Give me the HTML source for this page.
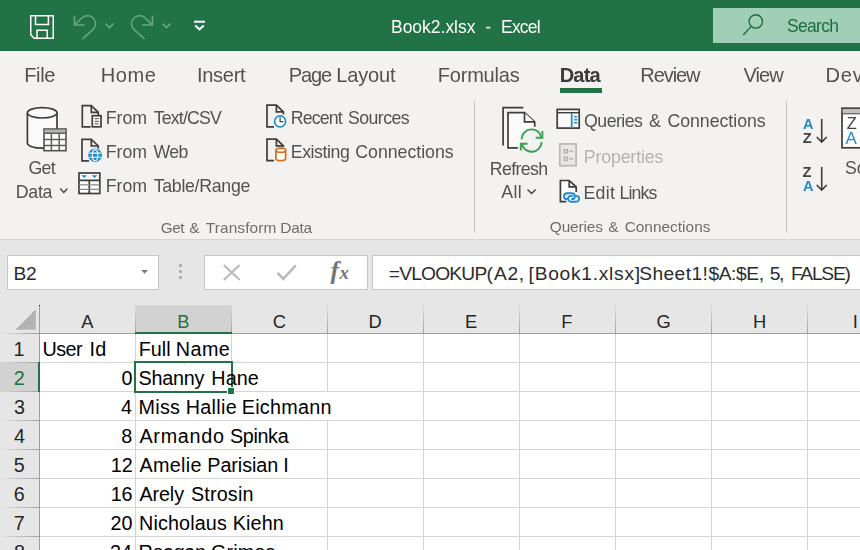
<!DOCTYPE html>
<html lang="en">
<head>
<meta charset="utf-8">
<title>Book2.xlsx - Excel</title>
<style>
*{box-sizing:border-box;margin:0;padding:0}
html,body{width:860px;height:550px;overflow:hidden;background:#fff}
body{position:relative;font-family:"Liberation Sans",Arial,sans-serif;color:#444}
.abs,.t,svg{position:absolute}
.t{white-space:pre;line-height:1;display:block}
#titlebar-text,#ribbon-tabs,#ribbon-commands,#ribbon-group-labels,#sort-icon-letters{will-change:transform}
#titlebar{left:0;top:0;width:860px;height:51px;background:#217346}
#search{left:713px;top:8px;width:147px;height:35px;background:#a0ceb7}
#ribbon{left:0;top:51px;width:860px;height:188px;background:#f3f2f1}
#ribbonline{left:0;top:239px;width:860px;height:1px;background:#d6d5d4}
#fbar{left:0;top:240px;width:860px;height:65px;background:#e6e6e6}
.box{background:#fff;border:1px solid #c6c6c6}
#namebox{left:7px;top:255px;width:152px;height:35px}
#fxbox{left:204px;top:255px;width:164px;height:35px}
#formulabox{left:372px;top:255px;width:500px;height:35px}
#tabline{left:560px;top:88px;width:42px;height:5px;background:#217346}
.vsep{width:1px;background:#c8c6c4;top:101px;height:132px}
#grid{left:0;top:305px;width:860px;height:245px;background:#fff}
#colhead{left:0;top:305px;width:860px;height:28px;background:#e6e6e6}
#rowhead{left:0;top:333px;width:39px;height:217px;background:#e6e6e6}
.hl{height:1px;background:#d4d4d4;left:39px;width:821px}
.rl{height:1px;background:linear-gradient(90deg,#e2e2e2,#a2a2a2);left:0;width:39px}
.vl{width:1px;background:#d4d4d4;top:334px;height:216px}
.cl{width:1px;background:linear-gradient(180deg,#dedede,#a0a0a0);top:305px;height:28px}
</style>
</head>
<body>
<div class="abs" id="titlebar"></div>
<div class="abs" style="left:0;top:50px;width:860px;height:1px;background:#1d6a3f"></div>
<div class="abs" id="search"></div>
<div class="abs" id="ribbon"></div>
<div class="abs" id="ribbonline"></div>
<div class="abs" id="fbar"></div>
<div class="abs box" id="namebox"></div>
<div class="abs box" id="fxbox"></div>
<div class="abs box" id="formulabox"></div>
<div class="abs" id="tabline"></div>
<div class="abs vsep" style="left:474px"></div>
<div class="abs vsep" style="left:786px"></div>
<div class="abs" id="grid"></div>
<div class="abs" id="colhead"></div>
<div class="abs" id="rowhead"></div>
<div class="abs" style="left:136px;top:305px;width:95px;height:28px;background:#d2d2d2"></div>
<div class="abs" style="left:0;top:363px;width:39px;height:28px;background:#d2d2d2"></div>
<div class="abs cl" style="left:135px"></div>
<div class="abs cl" style="left:231px"></div>
<div class="abs cl" style="left:327px"></div>
<div class="abs cl" style="left:423px"></div>
<div class="abs cl" style="left:519px"></div>
<div class="abs cl" style="left:615px"></div>
<div class="abs cl" style="left:711px"></div>
<div class="abs cl" style="left:807px"></div>
<div class="abs hl" style="top:362px"></div>
<div class="abs rl" style="top:362px;background:linear-gradient(90deg,#d6d6d6,#a2a2a2)"></div>
<div class="abs hl" style="top:391px"></div>
<div class="abs rl" style="top:391px;background:linear-gradient(90deg,#d6d6d6,#a2a2a2)"></div>
<div class="abs hl" style="top:420px"></div>
<div class="abs rl" style="top:420px"></div>
<div class="abs hl" style="top:449px"></div>
<div class="abs rl" style="top:449px"></div>
<div class="abs hl" style="top:478px"></div>
<div class="abs rl" style="top:478px"></div>
<div class="abs hl" style="top:507px"></div>
<div class="abs rl" style="top:507px"></div>
<div class="abs hl" style="top:536px"></div>
<div class="abs rl" style="top:536px"></div>
<div class="abs vl" style="left:135px"></div>
<div class="abs vl" style="left:231px;height:28px"></div>
<div class="abs vl" style="left:327px;height:57px"></div>
<div class="abs vl" style="left:327px;top:421px;height:129px"></div>
<div class="abs vl" style="left:423px"></div>
<div class="abs vl" style="left:519px"></div>
<div class="abs vl" style="left:615px"></div>
<div class="abs vl" style="left:711px"></div>
<div class="abs vl" style="left:807px"></div>
<div class="abs" style="left:0;top:333px;width:39px;height:1px;background:linear-gradient(90deg,#e2e2e2,#9e9e9e)"></div>
<div class="abs" style="left:39px;top:333px;width:821px;height:1px;background:#9e9e9e"></div>
<div class="abs" style="left:39px;top:306px;width:1px;height:244px;background:#9e9e9e"></div>
<div class="abs" style="left:39px;top:305px;width:1px;height:1px;background:#111"></div>
<div class="abs" style="left:135px;top:332px;width:97px;height:2px;background:#217346"></div>
<div class="abs" style="left:38px;top:362px;width:2px;height:30px;background:#217346"></div>
<div class="abs" id="sel" style="left:134px;top:361px;width:99px;height:32px;border:2px solid #217346"></div>
<div class="abs" style="left:227px;top:387px;width:8px;height:8px;background:#fff"></div>
<div class="abs" style="left:228px;top:388px;width:6px;height:6px;background:#217346"></div>
<svg id="icons" width="860" height="550" viewBox="0 0 860 550" style="left:0;top:0" fill="none" stroke-linecap="butt" stroke-linejoin="miter">
<!-- quick access toolbar -->
<g id="qat" stroke="#fff" stroke-width="1.5">
<path d="M30.75 15.75H53.25V38.25H34.2L30.75 34.8Z"/>
<path d="M35.5 15.75V24.5H48.4V15.75"/>
<path d="M37 38.25V30.2H47.2V38.25"/>
</g>
<g id="undo-redo" stroke="#65a582" stroke-width="1.6">
<path d="M74.5 15.7V25H84.7"/>
<path d="M74.9 24.6L81.8 18A8 8 0 0 1 93.2 29.4L82.6 38.9"/>
<path d="M105.4 23.6L109.5 27.6L113.6 23.6"/>
<path d="M152.5 15.7V25H142"/>
<path d="M152.1 24.6L145.3 18A8 8 0 0 0 133.9 29.4L144.5 38.9"/>
<path d="M162.5 23.6L166.4 27.6L170.3 23.6"/>
</g>
<g id="qat-more" stroke="#fff" stroke-width="2">
<path d="M194 21.7H205"/>
<path d="M195.2 25.5L199.5 29.3L203.8 25.5"/>
</g>
<!-- search magnifier -->
<g id="magnifier" stroke="#1e6b41" stroke-width="1.4">
<circle cx="755.8" cy="21.4" r="6.7"/>
<path d="M751.2 26.4L743.3 35"/>
</g>
<!-- Get Data -->
<g id="getdata" stroke="#3e3d3c" stroke-width="1.7">
<path d="M27.4 112.8V143A14.8 5.2 0 0 0 57 143V112.8" fill="#fafafa"/>
<ellipse cx="42.2" cy="112.8" rx="14.8" ry="5.2" fill="#fafafa"/>
<rect x="44" y="129" width="22" height="21.7" fill="#fff" stroke="#555351" stroke-width="1.6"/>
<rect x="44.75" y="129.75" width="20.5" height="3.3" fill="#b3b0ad" stroke="none"/>
<path d="M44 133.3H66M44 139.5H66M44 145.5H66M51.4 133.3V150.7M59.2 133.3V150.7" stroke="#5f5d5b" stroke-width="1.5"/>
</g>
<!-- From Text/CSV -->
<g id="fromtext" stroke="#3e3d3c" stroke-width="1.7">
<path d="M90.6 126.8H82.3V105.6H91.3L98.3 112.3V115.5"/>
<path d="M91.3 105.6V112.3H98.3"/>
<rect x="92.3" y="115.7" width="8.7" height="11.1" fill="#fff"/>
<path d="M94.6 118.7H98.8M94.6 121.3H98.8M94.6 123.9H98.8" stroke="#6a6866" stroke-width="1.2"/>
</g>
<!-- From Web -->
<g id="fromweb" stroke="#3e3d3c" stroke-width="1.7">
<path d="M89 160.8H82V139.3H91.3L98.3 146V148.5"/>
<path d="M91.3 139.3V146H98.3"/>
<circle cx="95.1" cy="155.2" r="6.8" fill="#1e8bcd" stroke="none"/>
<ellipse cx="95.1" cy="155.2" rx="2.7" ry="5.6" stroke="#fff" stroke-width="1.1"/>
<path d="M89.3 153.1H100.9M89.3 157.3H100.9" stroke="#fff" stroke-width="1.1"/>
</g>
<!-- From Table/Range -->
<g id="fromtable" stroke="#3e3d3c" stroke-width="1.7">
<rect x="79" y="173" width="20.8" height="20.5" fill="#fff"/>
<path d="M79 180.4H99.8M89.3 180.4V193.5"/>
<path d="M79 184.9H99.8M79 189.4H99.8" stroke="#8a8886" stroke-width="1.2"/>
<path d="M81.3 175.3H87.1L84.2 178.1ZM91.6 175.3H97.6L94.6 178.1Z" fill="#1e8bcd" stroke="none"/>
</g>
<!-- Recent Sources -->
<g id="recent" stroke="#3e3d3c" stroke-width="1.7">
<path d="M274 126.8H267V105.2H276.4L283.4 111.9V114.5"/>
<path d="M276.4 105.2V111.9H283.4"/>
<circle cx="280.1" cy="121.4" r="5.5" fill="#fff" stroke="#1e8bcd" stroke-width="1.6"/>
<path d="M280.1 117.2V121.7H283.4" stroke-width="1.2"/>
</g>
<!-- Existing Connections -->
<g id="existing" stroke="#3e3d3c" stroke-width="1.7">
<path d="M274 160.7H267V139.2H276.4L283.4 145.9V147"/>
<path d="M276.4 139.2V145.9H283.4"/>
<path d="M275.9 150.2V158.6A4.85 2.1 0 0 0 285.6 158.6V150.2" fill="#fff" stroke="#dc6c14"/>
<ellipse cx="280.75" cy="150.2" rx="4.85" ry="2.1" fill="#fff" stroke="#dc6c14"/>
</g>
<!-- Refresh All -->
<g id="refresh" stroke="#3e3d3c" stroke-width="1.7">
<path d="M503.1 145.6V107.6H523.3"/>
<path d="M517.9 147.9H508V112.7H524.5L534.7 121.9V126.7" fill="#fafafa"/>
<path d="M524.5 112.7V121.9H534.7" fill="#fafafa"/>
<circle cx="531.6" cy="140.6" r="12" fill="#f3f2f1" stroke="none"/>
<g stroke="#35a24d" stroke-width="1.9">
<path d="M521.6 139.2A10 10 0 0 1 541.4 137.4"/>
<path d="M542.4 131.1V137.8H535.7"/>
<path d="M541.6 142A10 10 0 0 1 521.8 143.8"/>
<path d="M520.8 150.4V143.7H527.6"/>
</g>
</g>
<!-- Queries & Connections -->
<g id="queries" stroke="#3e3d3c" stroke-width="1.7">
<rect x="557.2" y="109.4" width="22" height="18.7" fill="#fafafa"/>
<path d="M557.2 112.7H579.2" stroke-width="1.4"/>
<path d="M571.7 113V128" stroke="#1e8bcd"/>
<path d="M574.2 116.8H577.2M574.2 119.8H577.2M574.2 122.8H577.2" stroke="#1e8bcd" stroke-width="1.4"/>
</g>
<!-- Properties (disabled) -->
<g id="props" stroke="#bcbab8" stroke-width="1.8">
<rect x="559.8" y="143.9" width="16.3" height="21.8" fill="#e9e8e7"/>
<rect x="564.2" y="149.7" width="3.2" height="3.2" stroke-width="1.5" stroke="#b4b2b0"/>
<rect x="564.2" y="157.2" width="3.2" height="3.2" stroke-width="1.5" stroke="#b4b2b0"/>
<path d="M569.5 151.3H573M569.5 158.8H573" stroke-width="1.5" stroke="#b4b2b0"/>
</g>
<!-- Edit Links -->
<g id="editlinks" stroke="#3e3d3c" stroke-width="1.7">
<path d="M566.3 201.6H560.4V180.5H569.2L576.2 186.9V192" fill="#fafafa"/>
<path d="M569.2 180.5V186.9H576.2"/>
<g stroke="#1e8bcd" stroke-width="1.9" stroke-linecap="round">
<path d="M567 199.1A2.95 2.95 0 0 1 567 193.2H571.9A2.95 2.95 0 0 1 571.9 199.1"/>
<path d="M572.3 195.9H571A2.95 2.95 0 0 0 571 201.8H576.2A2.95 2.95 0 0 0 576.2 195.9"/>
</g>
</g>
<!-- dropdown chevrons -->
<g id="chevrons" stroke="#444" stroke-width="1.4">
<path d="M60.2 188.6L63.8 192.4L67.4 188.6"/>
<path d="M527.5 189.4L531.6 193.5L535.7 189.4"/>
</g>
<!-- Sort A-Z / Z-A arrows -->
<g id="sortarrows" stroke="#3e3d3c" stroke-width="1.6">
<path d="M821.7 119.1V141.8M816.7 137L821.7 142L826.7 137"/>
<path d="M821.7 167V189.8M816.7 185L821.7 190L826.7 185"/>
</g>
<!-- Sort big icon -->
<g id="sortbig" stroke="#3e3d3c" stroke-width="1.7">
<rect x="842" y="108.2" width="30" height="39.6" fill="#fff"/>
<rect x="842.75" y="108.95" width="20" height="4.4" fill="#c2c0be" stroke="none"/>
<path d="M842 113.8H862" stroke-width="1"/>
</g>
<!-- formula bar glyphs -->
<g id="fbaricons">
<path d="M141.2 270H148L144.6 273.8Z" fill="#777"/>
<path d="M179 264h3v3h-3zM179 270h3v3h-3zM179 276h3v3h-3z" fill="#b0b0b0"/>
<path d="M223.8 265L239.6 280M239.6 265L223.8 280" stroke="#b9b9b9" stroke-width="2"/>
<path d="M277.6 273L283.3 278.8L295.8 265.3" stroke="#b9b9b9" stroke-width="2.6"/>
</g>
<!-- select all corner -->
<path d="M35.8 309.3V329.8H15.4Z" fill="#b3b3b3"/>
</svg>

<div class="grp" id="titlebar-text">
<span class="t" style="left:391.02px;top:19px;font-size:17.44px;letter-spacing:0.013px;color:#fff">Book2.xlsx</span>
<span class="t" style="left:485.24px;top:19px;font-size:17.44px;color:#fff">-</span>
<span class="t" style="left:501.02px;top:19px;font-size:17.44px;letter-spacing:-0.757px;color:#fff">Excel</span>
<span class="t" style="left:786.92px;top:18px;font-size:17.44px;letter-spacing:-0.629px;color:#1e6b41">Search</span>
</div>
<div class="grp" id="ribbon-tabs">
<span class="t" style="left:24.29px;top:65px;font-size:20.06px;letter-spacing:-0.408px;color:#525252">File</span>
<span class="t" style="left:100.79px;top:65px;font-size:20.06px;letter-spacing:0.535px;color:#525252">Home</span>
<span class="t" style="left:196.91px;top:65px;font-size:20.06px;letter-spacing:-0.275px;color:#525252">Insert</span>
<span class="t" style="left:288.79px;top:65px;font-size:20.06px;letter-spacing:-1.168px;color:#525252">Page</span>
<span class="t" style="left:336.29px;top:65px;font-size:20.06px;letter-spacing:-0.162px;color:#525252">Layout</span>
<span class="t" style="left:437.79px;top:65px;font-size:20.06px;letter-spacing:-0.233px;color:#525252">Formulas</span>
<span class="t" style="left:559.63px;top:65px;font-size:20.06px;letter-spacing:-0.799px;color:#3b3a39;font-weight:700">Data</span>
<span class="t" style="left:640.29px;top:65px;font-size:20.06px;letter-spacing:-1.082px;color:#525252">Review</span>
<span class="t" style="left:743.47px;top:65px;font-size:20.06px;letter-spacing:-0.983px;color:#525252">View</span>
<span class="t" style="left:825.59px;top:65px;font-size:20.06px;letter-spacing:0.739px;color:#525252">Developer</span>
</div>
<div class="grp" id="ribbon-commands">
<span class="t" style="left:105.70px;top:110px;font-size:17.73px;letter-spacing:-0.007px;color:#525252">From</span>
<span class="t" style="left:153.69px;top:110px;font-size:17.73px;letter-spacing:-0.825px;color:#525252">Text/CSV</span>
<span class="t" style="left:105.70px;top:144px;font-size:17.73px;letter-spacing:-0.007px;color:#525252">From</span>
<span class="t" style="left:153.45px;top:144px;font-size:17.73px;letter-spacing:-0.593px;color:#525252">Web</span>
<span class="t" style="left:105.70px;top:178px;font-size:17.73px;letter-spacing:-0.007px;color:#525252">From</span>
<span class="t" style="left:153.69px;top:178px;font-size:17.73px;letter-spacing:-0.287px;color:#525252">Table/Range</span>
<span class="t" style="left:290.81px;top:110px;font-size:17.73px;letter-spacing:-0.842px;color:#525252">Recent</span>
<span class="t" style="left:347.93px;top:110px;font-size:17.73px;letter-spacing:-0.551px;color:#525252">Sources</span>
<span class="t" style="left:290.81px;top:144px;font-size:17.73px;letter-spacing:-0.435px;color:#525252">Existing</span>
<span class="t" style="left:355.33px;top:144px;font-size:17.73px;letter-spacing:-0.020px;color:#525252">Connections</span>
<span class="t" style="left:28.50px;top:160px;font-size:17.73px;letter-spacing:-0.689px;color:#525252">Get</span>
<span class="t" style="left:15.72px;top:184px;font-size:17.73px;letter-spacing:-0.232px;color:#525252">Data</span>
<span class="t" style="left:489.70px;top:161px;font-size:17.73px;letter-spacing:-0.588px;color:#525252">Refresh</span>
<span class="t" style="left:501.31px;top:184px;font-size:17.73px;letter-spacing:0.327px;color:#525252">All</span>
<span class="t" style="left:584.10px;top:113px;font-size:17.73px;letter-spacing:-0.539px;color:#525252">Queries</span>
<span class="t" style="left:649.06px;top:113px;font-size:17.73px;color:#525252">&amp;</span>
<span class="t" style="left:667.43px;top:113px;font-size:17.73px;letter-spacing:-0.022px;color:#525252">Connections</span>
<span class="t" style="left:583.72px;top:149px;font-size:17.73px;letter-spacing:-0.128px;color:#b5b3b1">Properties</span>
<span class="t" style="left:583.42px;top:185px;font-size:17.73px;letter-spacing:0.322px;color:#525252">Edit</span>
<span class="t" style="left:619.42px;top:185px;font-size:17.73px;letter-spacing:-0.864px;color:#525252">Links</span>
<span class="t" style="left:844.88px;top:160px;font-size:17.73px;letter-spacing:-0.060px;color:#525252">Sort</span>
</div>
<div class="grp" id="ribbon-group-labels">
<span class="t" style="left:160.68px;top:220px;font-size:15.41px;letter-spacing:-0.498px;color:#706e6c">Get</span>
<span class="t" style="left:189.34px;top:220px;font-size:15.41px;color:#706e6c">&amp;</span>
<span class="t" style="left:205.71px;top:220px;font-size:15.41px;letter-spacing:0.138px;color:#706e6c">Transform</span>
<span class="t" style="left:280.25px;top:220px;font-size:15.41px;letter-spacing:-0.205px;color:#706e6c">Data</span>
<span class="t" style="left:549.84px;top:219px;font-size:15.41px;letter-spacing:-0.156px;color:#706e6c">Queries</span>
<span class="t" style="left:608.15px;top:219px;font-size:15.41px;color:#706e6c">&amp;</span>
<span class="t" style="left:624.63px;top:219px;font-size:15.41px;letter-spacing:0.016px;color:#706e6c">Connections</span>
</div>
<div class="grp" id="sort-icon-letters">
<span class="t" style="left:802.91px;top:117px;font-size:14.53px;color:#1e8bcd;font-weight:700">A</span>
<span class="t" style="left:802.75px;top:131px;font-size:14.68px;color:#444;font-weight:700">Z</span>
<span class="t" style="left:802.41px;top:165px;font-size:14.68px;color:#444;font-weight:700">Z</span>
<span class="t" style="left:802.91px;top:179px;font-size:14.53px;color:#1e8bcd;font-weight:700">A</span>
<span class="t" style="left:846.65px;top:115px;font-size:16.42px;color:#444">Z</span>
<span class="t" style="left:845.45px;top:130px;font-size:17.01px;color:#1e8bcd">A</span>
</div>
<div class="grp" id="formula-bar-text">
<span class="t" style="left:13.39px;top:264px;font-size:19.19px;letter-spacing:-0.220px;color:#2b2b2b">B2</span>
<span class="t" style="left:330.40px;top:258px;font-size:25.34px;color:#747474;font-weight:700;font-family:'Liberation Serif',serif;font-style:italic">f</span>
<span class="t" style="left:339.61px;top:264px;font-size:18.78px;color:#747474;font-weight:700;font-family:'Liberation Serif',serif;font-style:italic">x</span>
<span class="t" style="left:388.71px;top:264px;font-size:19.19px;letter-spacing:-0.781px;color:#2b2b2b">=VLOOKUP(</span>
<span class="t" style="left:494.08px;top:264px;font-size:19.19px;letter-spacing:0.576px;color:#2b2b2b">A2,</span>
<span class="t" style="left:528.57px;top:264px;font-size:19.19px;letter-spacing:0.734px;color:#2b2b2b">[Book1.xlsx]</span>
<span class="t" style="left:639.28px;top:264px;font-size:19.19px;letter-spacing:0.404px;color:#2b2b2b">Sheet1!</span>
<span class="t" style="left:708.40px;top:264px;font-size:19.19px;letter-spacing:-0.393px;color:#2b2b2b">$A:$E,</span>
<span class="t" style="left:769.76px;top:264px;font-size:19.19px;letter-spacing:-1.315px;color:#2b2b2b">5,</span>
<span class="t" style="left:790.89px;top:264px;font-size:19.19px;letter-spacing:-1.223px;color:#2b2b2b">FALSE)</span>
</div>
<div class="grp" id="column-headers">
<span class="t" style="left:81.37px;top:313px;font-size:18.31px;color:#262626">A</span>
<span class="t" style="left:177.17px;top:313px;font-size:18.31px;color:#217346">B</span>
<span class="t" style="left:272.87px;top:313px;font-size:18.31px;color:#262626">C</span>
<span class="t" style="left:368.54px;top:313px;font-size:18.31px;color:#262626">D</span>
<span class="t" style="left:464.96px;top:313px;font-size:18.31px;color:#262626">E</span>
<span class="t" style="left:561.34px;top:313px;font-size:18.31px;color:#262626">F</span>
<span class="t" style="left:656.56px;top:313px;font-size:18.31px;color:#262626">G</span>
<span class="t" style="left:752.91px;top:313px;font-size:18.31px;color:#262626">H</span>
<span class="t" style="left:852.81px;top:313px;font-size:18.31px;color:#262626">I</span>
</div>
<div class="grp" id="row-headers">
<span class="t" style="left:13.57px;top:340px;font-size:19.77px;color:#262626">1</span>
<span class="t" style="left:13.82px;top:369px;font-size:19.77px;color:#217346">2</span>
<span class="t" style="left:13.91px;top:398px;font-size:19.77px;color:#262626">3</span>
<span class="t" style="left:14.02px;top:427px;font-size:19.77px;color:#262626">4</span>
<span class="t" style="left:13.84px;top:456px;font-size:19.77px;color:#262626">5</span>
<span class="t" style="left:13.73px;top:485px;font-size:19.77px;color:#262626">6</span>
<span class="t" style="left:13.80px;top:514px;font-size:19.77px;color:#262626">7</span>
<span class="t" style="left:13.91px;top:543px;font-size:19.77px;color:#262626">8</span>
</div>
<div class="grp" id="cells">
<span class="t" style="left:42.62px;top:340px;font-size:19.77px;letter-spacing:-0.623px;color:#000">User</span>
<span class="t" style="left:89.55px;top:340px;font-size:19.77px;letter-spacing:0.238px;color:#000">Id</span>
<span class="t" style="left:138.79px;top:340px;font-size:19.77px;letter-spacing:-0.010px;color:#000">Full</span>
<span class="t" style="left:175.79px;top:340px;font-size:19.77px;letter-spacing:0.451px;color:#000">Name</span>
<span class="t" style="left:138.41px;top:369px;font-size:19.77px;letter-spacing:-0.191px;color:#000">Shanny</span>
<span class="t" style="left:211.29px;top:369px;font-size:19.77px;letter-spacing:0.108px;color:#000">Hane</span>
<span class="t" style="left:138.59px;top:398px;font-size:19.77px;letter-spacing:0.244px;color:#000">Miss</span>
<span class="t" style="left:185.79px;top:398px;font-size:19.77px;letter-spacing:0.281px;color:#000">Hallie</span>
<span class="t" style="left:241.77px;top:398px;font-size:19.77px;letter-spacing:0.264px;color:#000">Eichmann</span>
<span class="t" style="left:139.42px;top:427px;font-size:19.77px;letter-spacing:0.742px;color:#000">Armando</span>
<span class="t" style="left:229.91px;top:427px;font-size:19.77px;letter-spacing:-0.344px;color:#000">Spinka</span>
<span class="t" style="left:139.42px;top:456px;font-size:19.77px;letter-spacing:0.358px;color:#000">Amelie</span>
<span class="t" style="left:207.29px;top:456px;font-size:19.77px;letter-spacing:-0.063px;color:#000">Parisian</span>
<span class="t" style="left:283.18px;top:456px;font-size:19.77px;color:#000">I</span>
<span class="t" style="left:139.42px;top:485px;font-size:19.77px;letter-spacing:-0.102px;color:#000">Arely</span>
<span class="t" style="left:190.91px;top:485px;font-size:19.77px;letter-spacing:0.171px;color:#000">Strosin</span>
<span class="t" style="left:139.09px;top:514px;font-size:19.77px;letter-spacing:0.115px;color:#000">Nicholaus</span>
<span class="t" style="left:232.79px;top:514px;font-size:19.77px;letter-spacing:0.117px;color:#000">Kiehn</span>
<span class="t" style="left:138.59px;top:543px;font-size:19.77px;letter-spacing:-0.371px;color:#000">Reagan</span>
<span class="t" style="left:210.94px;top:543px;font-size:19.77px;letter-spacing:0.135px;color:#000">Grimes</span>
<span class="t" style="left:121.47px;top:369px;font-size:19.77px;color:#000">0</span>
<span class="t" style="left:121.09px;top:398px;font-size:19.77px;color:#000">4</span>
<span class="t" style="left:121.37px;top:427px;font-size:19.77px;color:#000">8</span>
<span class="t" style="left:110.69px;top:456px;font-size:19.77px;color:#000">12</span>
<span class="t" style="left:110.63px;top:485px;font-size:19.77px;color:#000">16</span>
<span class="t" style="left:110.47px;top:514px;font-size:19.77px;color:#000">20</span>
<span class="t" style="left:110.10px;top:543px;font-size:19.77px;color:#000">24</span>
</div>
</body>
</html>
